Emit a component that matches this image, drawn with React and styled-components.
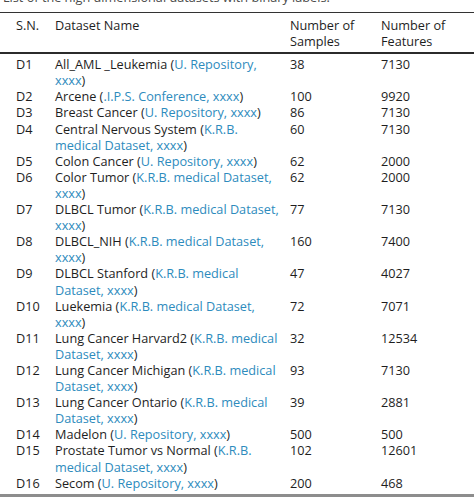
import styled, { createGlobalStyle } from 'styled-components';

const GlobalStyle = createGlobalStyle`
  html, body {
    margin: 0;
    padding: 0;
    background: #fff;
  }
  body {
    font-family: "Open Sans", "Noto Sans", sans-serif;
    color: #1e1e1e;
    overflow: hidden;
  }
`;

const DATASETS = [
  { sn: 'D1', name: 'All_AML _Leukemia', src: ['U. Repository,', 'xxxx'], samples: 38, features: 7130 },
  { sn: 'D2', name: 'Arcene', src: ['.I.P.S. Conference, xxxx'], samples: 100, features: 9920 },
  { sn: 'D3', name: 'Breast Cancer', src: ['U. Repository, xxxx'], samples: 86, features: 7130 },
  { sn: 'D4', name: 'Central Nervous System', src: ['K.R.B.', 'medical Dataset, xxxx'], samples: 60, features: 7130 },
  { sn: 'D5', name: 'Colon Cancer', src: ['U. Repository, xxxx'], samples: 62, features: 2000 },
  { sn: 'D6', name: 'Color Tumor', src: ['K.R.B. medical Dataset,', 'xxxx'], samples: 62, features: 2000 },
  { sn: 'D7', name: 'DLBCL Tumor', src: ['K.R.B. medical Dataset,', 'xxxx'], samples: 77, features: 7130 },
  { sn: 'D8', name: 'DLBCL_NIH', src: ['K.R.B. medical Dataset,', 'xxxx'], samples: 160, features: 7400 },
  { sn: 'D9', name: 'DLBCL Stanford', src: ['K.R.B. medical', 'Dataset, xxxx'], samples: 47, features: 4027 },
  { sn: 'D10', name: 'Luekemia', src: ['K.R.B. medical Dataset,', 'xxxx'], samples: 72, features: 7071 },
  { sn: 'D11', name: 'Lung Cancer Harvard2', src: ['K.R.B. medical', 'Dataset, xxxx'], samples: 32, features: 12534 },
  { sn: 'D12', name: 'Lung Cancer Michigan', src: ['K.R.B. medical', 'Dataset, xxxx'], samples: 93, features: 7130 },
  { sn: 'D13', name: 'Lung Cancer Ontario', src: ['K.R.B. medical', 'Dataset, xxxx'], samples: 39, features: 2881 },
  { sn: 'D14', name: 'Madelon', src: ['U. Repository, xxxx'], samples: 500, features: 500 },
  { sn: 'D15', name: 'Prostate Tumor vs Normal', src: ['K.R.B.', 'medical Dataset, xxxx'], samples: 102, features: 12601 },
  { sn: 'D16', name: 'Secom', src: ['U. Repository, xxxx'], samples: 200, features: 468 },
];

const Page = styled.div`
  width: 474px;
  height: 499px;
  overflow: hidden;
  font-size: 12.7px;
  line-height: 16.1px;
`;

const Caption = styled.div`
  margin-top: -11px;
  padding-left: 3px;
  height: 16px;
  color: #4a4a4a;
  white-space: nowrap;
`;

const Table = styled.div`
  display: grid;
  grid-template-columns: 16px 39px 235px 91px 1fr;
  border-top: 1px solid #333;
  border-bottom: 3px solid #8d8d8d;
  margin-top: 7px;
`;

const Row = styled.div`
  display: contents;
`;

const Cell = styled.div`
  grid-column: ${(p) => p.col};
  white-space: nowrap;
  padding-top: ${(p) => (p.head ? '4px' : p.first ? '2px' : '0')};
  padding-bottom: ${(p) => (p.head ? '3px' : p.last ? '3px' : '0')};
  border-bottom: ${(p) => (p.head ? '2px solid #2b2b2b' : 'none')};
`;

const Link = styled.span`
  color: #2d8bbd;
`;

export default function App() {
  return (
    <>
      <GlobalStyle />
      <Page>
        <Caption>List of the high dimensional datasets with binary labels.</Caption>
        <Table>
          <Row>
            <Cell head col={1} />
            <Cell head col={2}>S.N.</Cell>
            <Cell head col={3}>Dataset Name</Cell>
            <Cell head col={4}>Number of<br />Samples</Cell>
            <Cell head col={5}>Number of<br />Features</Cell>
          </Row>
          {DATASETS.map((d, i) => {
            const first = i === 0;
            const last = i === DATASETS.length - 1;
            return (
              <Row key={d.sn}>
                <Cell col={1} first={first} last={last} />
                <Cell col={2} first={first} last={last}>{d.sn}</Cell>
                <Cell col={3} first={first} last={last}>
                  {d.name} (<Link>{d.src[0]}</Link>
                  {d.src[1] && (
                    <>
                      <br />
                      <Link>{d.src[1]}</Link>
                    </>
                  )}
                  )
                </Cell>
                <Cell col={4} first={first} last={last}>{d.samples}</Cell>
                <Cell col={5} first={first} last={last}>{d.features}</Cell>
              </Row>
            );
          })}
        </Table>
      </Page>
    </>
  );
}
